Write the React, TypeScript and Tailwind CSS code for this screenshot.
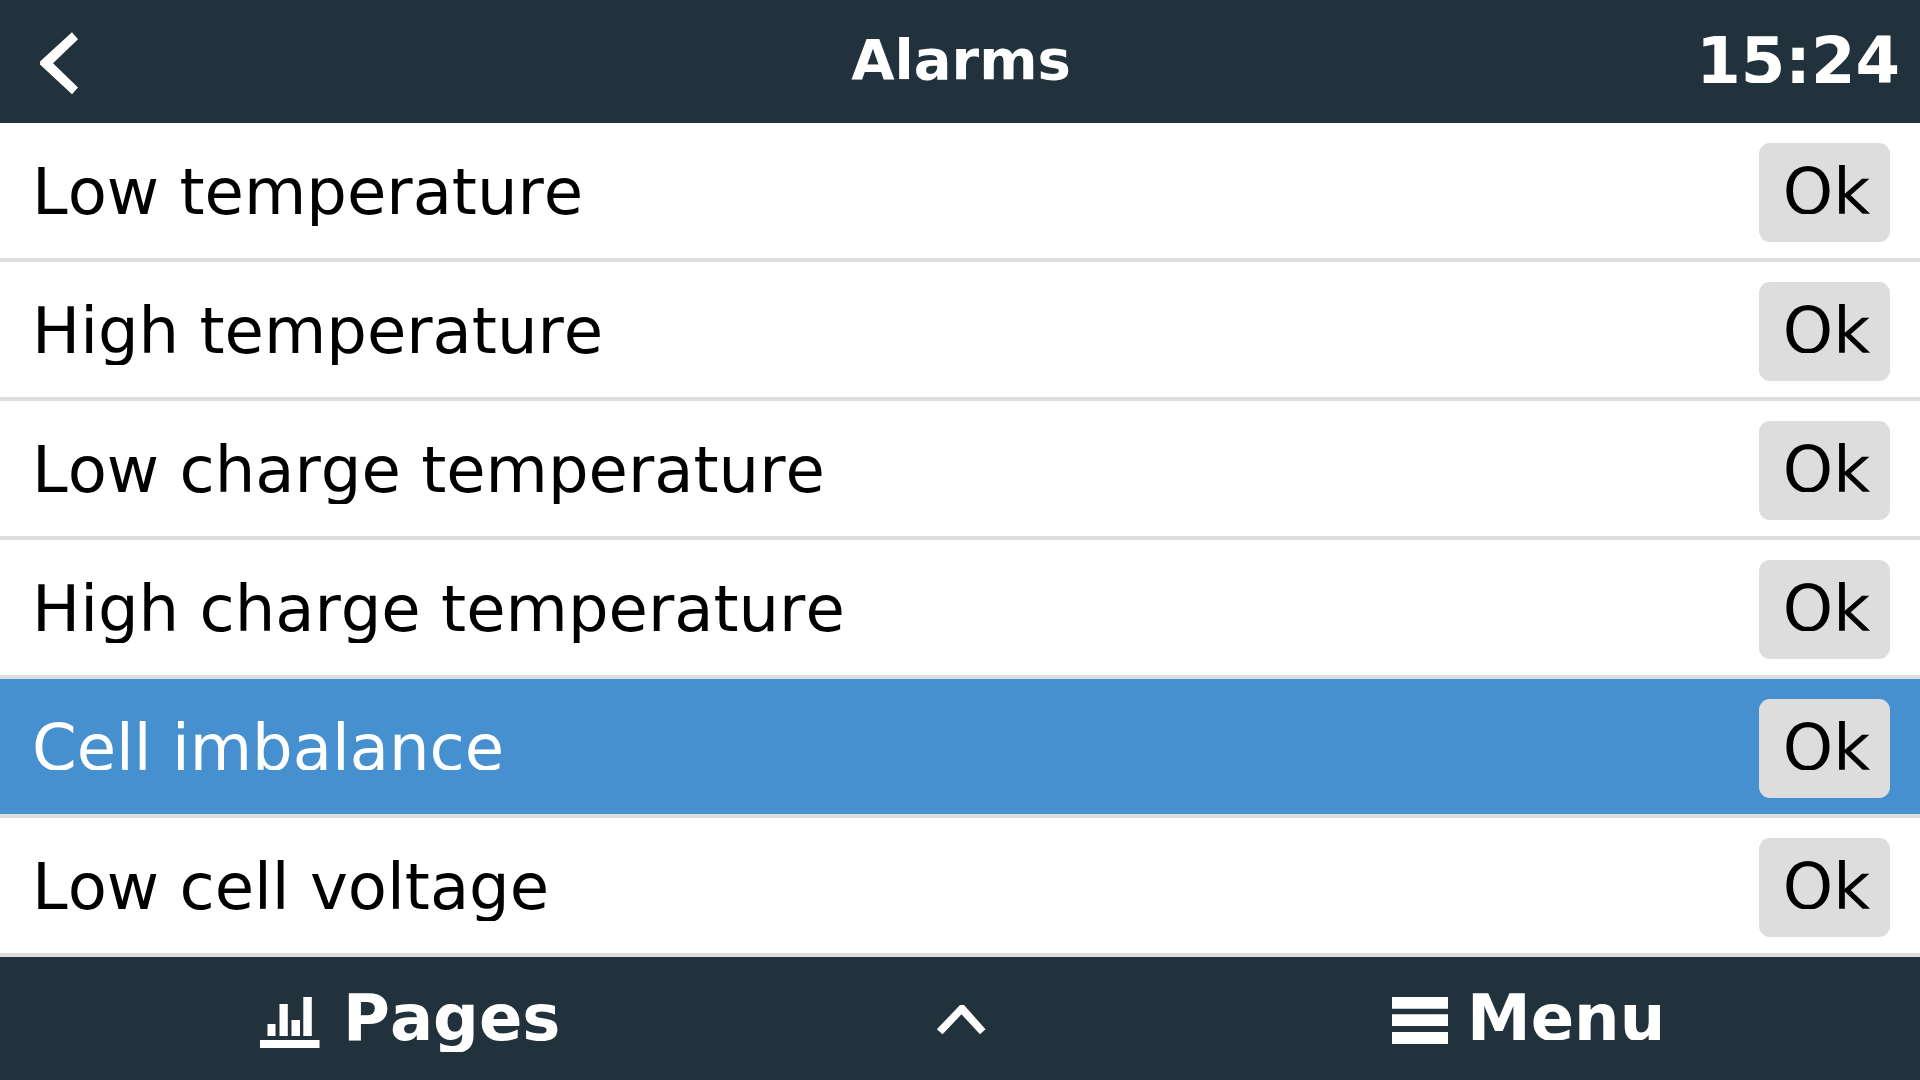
interface IAlarm {
  label: string;
  status: string;
  selected?: boolean;
}

const alarms: IAlarm[] = [
  { label: "Low temperature", status: "Ok" },
  { label: "High temperature", status: "Ok" },
  { label: "Low charge temperature", status: "Ok" },
  { label: "High charge temperature", status: "Ok" },
  { label: "Cell imbalance", status: "Ok", selected: true },
  { label: "Low cell voltage", status: "Ok" },
];

const BackIcon = () => (
  <svg className="mt-8 ml-10 h-[63px] w-[38px]" viewBox="0 0 38 63" fill="white">
    <path d="M32 0.3L38 7.3L13 31.2L38 55.5L32 62.3L0 32.5V29.5Z" />
  </svg>
);

const PagesIcon = () => (
  <svg className="mt-10 h-[51px] w-[60px]" viewBox="0 0 60 51" fill="white">
    <path d="M7.5 27H15.5V39H7.5ZM19.5 7H27.8V39H19.5ZM31.5 23H40V39H31.5ZM43.3 0H51.8V39H43.3ZM0 43H59.5V51H0Z" />
  </svg>
);

const UpIcon = () => (
  <svg className="mt-12 h-[30px] w-[50px]" viewBox="0 0 50 30" fill="white">
    <path d="M24 0H28L49.5 24.3L44 29.3L25.5 9.3L6.5 29.3L0.8 24.3Z" />
  </svg>
);

const MenuIcon = () => (
  <svg className="mt-10 h-[47px] w-[56px]" viewBox="0 0 56 47" fill="white">
    <path d="M0 0H56V11.7H0ZM0 17.2H56V29H0ZM0 35H56V47H0Z" />
  </svg>
);

const AlarmRow = ({ label, status, selected }: IAlarm) => (
  <li
    className={`flex h-[139px] items-start justify-between border-b-4 border-[#dddddd] pr-[30px] pl-8 ${
      selected ? "bg-[#4790d0] text-white" : "bg-white text-black"
    }`}
  >
    <span
      className={`mt-[35px] overflow-hidden ${
        /[gpqy]/.test(label) ? "h-[68px]" : "h-[56px]"
      }`}
    >
      {label}
    </span>
    <span className="mt-5 flex h-[99px] w-[131px] items-start justify-center rounded-[11px] bg-[#dddddd] pt-[15px] pl-1 text-black">
      <span className="h-[56px] overflow-hidden">{status}</span>
    </span>
  </li>
);

const App = () => {
  return (
    <div className="flex h-[1080px] w-[1920px] flex-col overflow-hidden bg-white font-['DejaVu_Sans',sans-serif] text-[64px] leading-[68px] [font-kerning:none]">
      <header className="grid h-[123px] grid-cols-3 items-start bg-[#22323c] font-bold text-white">
        <BackIcon />
        <h1 className="mt-[26px] pl-0.5 text-center text-[56px]">Alarms</h1>
        <p className="mt-[27px] h-[56px] overflow-hidden pr-5 text-right">
          15:24
        </p>
      </header>
      <ul>
        {alarms.map((alarm) => (
          <AlarmRow key={alarm.label} {...alarm} />
        ))}
      </ul>
      <footer className="grid flex-1 grid-cols-3 items-start bg-[#22323c] font-bold text-white">
        <div className="flex items-start gap-[23px] pl-[260px]">
          <PagesIcon />
          <span className="mt-[27px] h-[68px] overflow-hidden">Pages</span>
        </div>
        <div className="flex justify-center pl-0.5">
          <UpIcon />
        </div>
        <div className="flex items-start gap-[19px] pl-[112px]">
          <MenuIcon />
          <span className="mt-[27px] h-[56px] overflow-hidden">Menu</span>
        </div>
      </footer>
    </div>
  );
};

export default App;
